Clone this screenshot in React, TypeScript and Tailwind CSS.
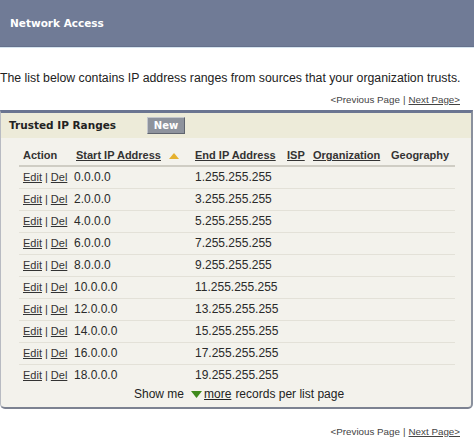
import React from 'react';

type Range = { start: string; end: string };

const ranges: Range[] = [
  { start: '0.0.0.0', end: '1.255.255.255' },
  { start: '2.0.0.0', end: '3.255.255.255' },
  { start: '4.0.0.0', end: '5.255.255.255' },
  { start: '6.0.0.0', end: '7.255.255.255' },
  { start: '8.0.0.0', end: '9.255.255.255' },
  { start: '10.0.0.0', end: '11.255.255.255' },
  { start: '12.0.0.0', end: '13.255.255.255' },
  { start: '14.0.0.0', end: '15.255.255.255' },
  { start: '16.0.0.0', end: '17.255.255.255' },
  { start: '18.0.0.0', end: '19.255.255.255' },
];

const Pager = () => (
  <div className="flex justify-end pr-[14px] text-[9.8px] text-[#444]">
    <span>&lt;Previous Page</span>
    <span className="px-[3px]">|</span>
    <a className="underline">Next Page&gt;</a>
  </div>
);

export default function App() {
  return (
    <div className="w-[474px] h-[439px] bg-white overflow-hidden font-['Liberation_Sans',Arial,sans-serif] text-[#222]">
      {/* Page title bar */}
      <div className="h-[47px] bg-[#707b96] border-b border-[#66718c] flex items-center pl-[10px] pt-[1px]">
        <h1 className="font-['DejaVu_Sans',Verdana,sans-serif] font-bold text-[10.5px] text-white">
          Network Access
        </h1>
      </div>
      <div className="h-px bg-[#d6e4ef]" />

      <p className="mt-[22px] whitespace-nowrap text-[12.3px] leading-[16px] text-[#222]">
        The list below contains IP address ranges from sources that your organization trusts.
      </p>

      <div className="mt-[8px] leading-[12px]">
        <Pager />
      </div>

      {/* Trusted IP Ranges panel */}
      <div className="mt-[4px] w-[473px] border-t-[3px] border-t-[#6b7591] border-r-2 border-b-2 border-l border-r-[#8a909d] border-b-[#7c8291] border-l-[#b8bbc2] rounded-b-[5px] bg-[#f3f2ec]">
        <div className="h-[25px] bg-[#edebd9] flex items-center pl-[8px]">
          <h2 className="w-[138px] font-['DejaVu_Sans',Verdana,sans-serif] font-bold text-[10.5px] text-[#222]">
            Trusted IP Ranges
          </h2>
          <button className="h-[17px] w-[38px] bg-[#8e939d] border border-t-[#c4c7cd] border-l-[#c4c7cd] border-r-[#5f646e] border-b-[#5f646e] font-['DejaVu_Sans',Verdana,sans-serif] font-bold text-[10px] text-white leading-none">
            New
          </button>
        </div>

        <div className="pl-[18px] pr-[17px] pt-[8px]">
          <table className="w-[436px] table-fixed border-collapse text-[12px] text-[#2a2a2a]">
            <colgroup>
              <col className="w-[51px]" />
              <col className="w-[121px]" />
              <col className="w-[92px]" />
              <col className="w-[26px]" />
              <col className="w-[78px]" />
              <col className="w-[68px]" />
            </colgroup>
            <thead>
              <tr className="h-[20px] border-b-2 border-[#cfcdc4] text-left text-[11px] text-[#333]">
                <th className="pl-[4px] font-bold">Action</th>
                <th className="pl-[6px] font-bold">
                  <span className="inline-flex items-center gap-[8px]">
                    <a className="underline">Start IP Address</a>
                    <svg width="10" height="6" viewBox="0 0 10 6">
                      <polygon points="5,0 10,6 0,6" fill="#e5b12e" />
                    </svg>
                  </span>
                </th>
                <th className="pl-[4px] font-bold">
                  <a className="underline">End IP Address</a>
                </th>
                <th className="pl-[4px] font-bold">
                  <a className="underline">ISP</a>
                </th>
                <th className="pl-[4px] font-bold">
                  <a className="underline">Organization</a>
                </th>
                <th className="pl-[4px] font-bold">Geography</th>
              </tr>
            </thead>
            <tbody>
              {ranges.map((r, i) => (
                <tr
                  key={r.start}
                  className={`h-[22px] ${i < ranges.length - 1 ? 'border-b border-[#e3e1d8]' : ''}`}
                >
                  <td className="pl-[4px] whitespace-nowrap text-[11px] text-[#333]">
                    <a className="underline">Edit</a>
                    <span className="px-[3px]">|</span>
                    <a className="underline">Del</a>
                  </td>
                  <td className="pl-[4px]">{r.start}</td>
                  <td className="pl-[4px]">{r.end}</td>
                  <td />
                  <td />
                  <td />
                </tr>
              ))}
            </tbody>
          </table>
          <div className="h-[16px] pb-[5px] box-content flex items-center pl-[115px] text-[12px] text-[#222]">
            <span>Show me</span>
            <svg width="11" height="7" viewBox="0 0 11 7" className="ml-[7px] mr-[2px]">
              <polygon points="0,0 11,0 5.5,7" fill="#3f8a1c" />
            </svg>
            <a className="underline">more</a>
            <span className="ml-[4px]">records per list page</span>
          </div>
        </div>
      </div>

      <div className="mt-[17px] leading-[12px]">
        <Pager />
      </div>
    </div>
  );
}
